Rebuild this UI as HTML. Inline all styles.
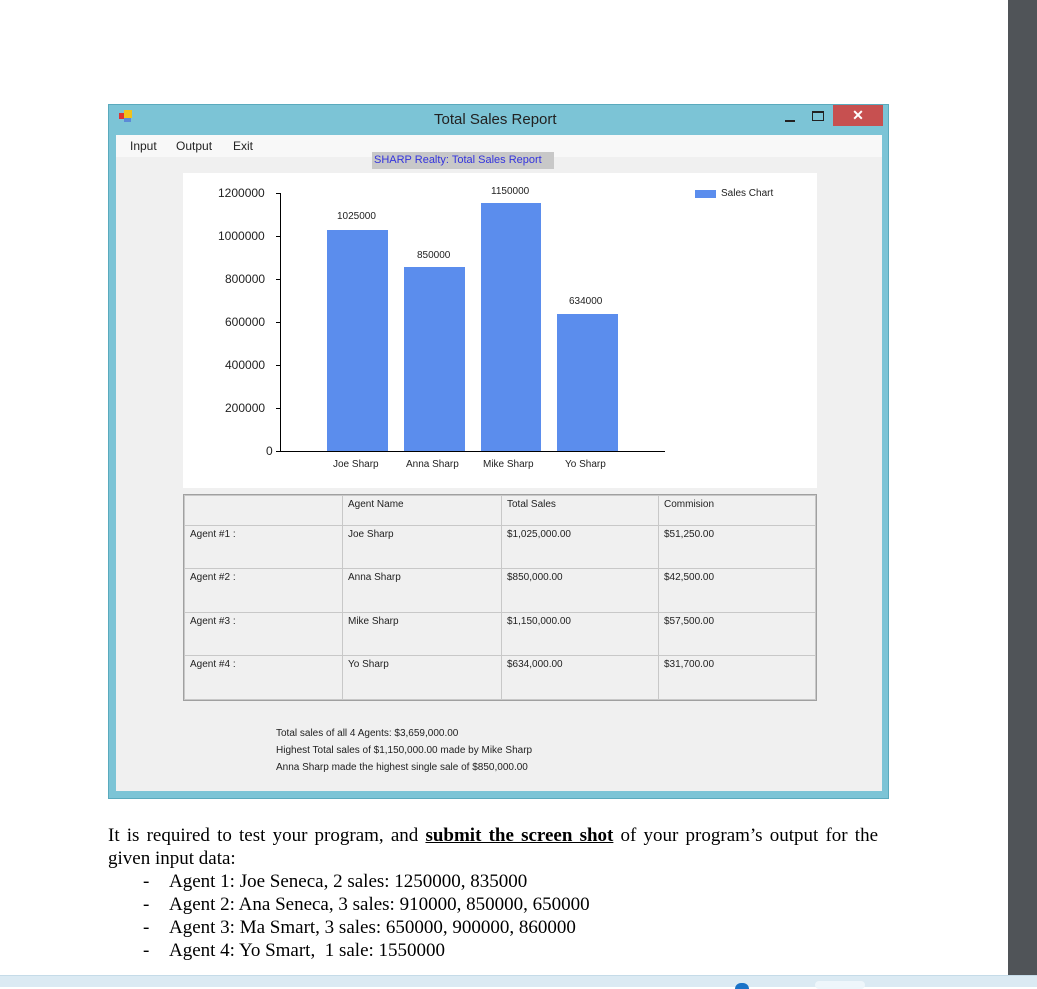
<!DOCTYPE html>
<html><head><meta charset="utf-8"><style>
*{margin:0;padding:0;box-sizing:border-box}
body{width:1037px;height:987px;background:#fff;position:relative;overflow:hidden;font-family:"Liberation Sans",sans-serif}
.a{position:absolute}
.t{font-size:11px;color:#222;position:absolute;white-space:nowrap}
.cell{position:absolute;border:1px solid #c8c8c8;background:#f0f0f0;font-size:10px;color:#222;padding:3px 5px}
.ser{font-family:"Liberation Serif",serif;font-size:19px;color:#000;position:absolute;white-space:nowrap}
</style></head><body>
<div class="a" style="left:1008px;top:0;width:29px;height:975px;background:#505458"></div>
<div class="a" style="left:0;top:975px;width:1037px;height:12px;background:#dbeaf3;border-top:1px solid #c5dbe8"></div>
<div class="a" style="left:735px;top:983px;width:14px;height:6px;background:#1a73c8;border-radius:7px 7px 0 0"></div>
<div class="a" style="left:815px;top:981px;width:50px;height:8px;background:#eef6fb;border-radius:4px"></div>

<div class="a" style="left:108px;top:104px;width:781px;height:695px;background:#7cc4d6;border:1px solid #5aaabd"></div>
<div class="a" style="left:119px;top:113px;width:6px;height:6px;background:#d33"></div>
<div class="a" style="left:124px;top:110px;width:8px;height:8px;background:#f2c21b"></div>
<div class="a" style="left:124px;top:118px;width:7px;height:4px;background:#5b8ad8"></div>
<div class="t" style="left:434px;top:111px;font-size:15px;color:#222">Total Sales Report</div>
<div class="a" style="left:785px;top:120px;width:10px;height:2px;background:#222"></div>
<div class="a" style="left:812px;top:111px;width:12px;height:10px;border:1px solid #222;border-top-width:2px"></div>
<div class="a" style="left:833px;top:105px;width:50px;height:21px;background:#c75050;color:#fff;font-size:14px;text-align:center;line-height:21px;font-weight:bold">✕</div>

<div class="a" style="left:116px;top:135px;width:766px;height:656px;background:#f0f0f0"></div>
<div class="a" style="left:116px;top:135px;width:766px;height:22px;background:#f8f8f8"></div>
<div class="t" style="left:130px;top:139px;font-size:12px">Input</div>
<div class="t" style="left:176px;top:139px;font-size:12px">Output</div>
<div class="t" style="left:233px;top:139px;font-size:12px">Exit</div>
<div class="a" style="left:372px;top:152px;width:182px;height:17px;background:#c8c8c8"></div>
<div class="t" style="left:374px;top:154px;color:#3333dd">SHARP Realty: Total Sales Report</div>

<div class="a" style="left:183px;top:173px;width:634px;height:315px;background:#fff"></div>
<svg class="a" style="left:0;top:0" width="1037" height="987">
<g stroke="#000" stroke-width="1">
<line x1="280.5" y1="193" x2="280.5" y2="451"/>
<line x1="280" y1="451.5" x2="665" y2="451.5"/>
<line x1="276" y1="193.5" x2="280" y2="193.5"/>
<line x1="276" y1="236.5" x2="280" y2="236.5"/>
<line x1="276" y1="279.5" x2="280" y2="279.5"/>
<line x1="276" y1="322.5" x2="280" y2="322.5"/>
<line x1="276" y1="365.5" x2="280" y2="365.5"/>
<line x1="276" y1="408.5" x2="280" y2="408.5"/>
<line x1="276" y1="451.5" x2="280" y2="451.5"/>
</g>
<g fill="#5b8ded">
<rect x="327" y="230" width="61" height="221"/>
<rect x="404" y="267" width="61" height="184"/>
<rect x="481" y="203" width="60" height="248"/>
<rect x="557" y="314" width="61" height="137"/>
<rect x="695" y="190" width="21" height="8"/>
</g>
</svg>
<div class="t" style="left:218px;top:186px;font-size:12px">1200000</div>
<div class="t" style="left:218px;top:229px;font-size:12px">1000000</div>
<div class="t" style="left:225px;top:272px;font-size:12px">800000</div>
<div class="t" style="left:225px;top:315px;font-size:12px">600000</div>
<div class="t" style="left:225px;top:358px;font-size:12px">400000</div>
<div class="t" style="left:225px;top:401px;font-size:12px">200000</div>
<div class="t" style="left:266px;top:444px;font-size:12px">0</div>
<div class="t" style="left:337px;top:211px;font-size:10px">1025000</div>
<div class="t" style="left:417px;top:250px;font-size:10px">850000</div>
<div class="t" style="left:491px;top:186px;font-size:10px">1150000</div>
<div class="t" style="left:569px;top:296px;font-size:10px">634000</div>
<div class="t" style="left:333px;top:459px;font-size:10px">Joe Sharp</div>
<div class="t" style="left:406px;top:459px;font-size:10px">Anna Sharp</div>
<div class="t" style="left:483px;top:459px;font-size:10px">Mike Sharp</div>
<div class="t" style="left:565px;top:459px;font-size:10px">Yo Sharp</div>
<div class="t" style="left:721px;top:188px;font-size:10px">Sales Chart</div>

<div class="a" style="left:183px;top:494px;width:634px;height:207px;border:1px solid #a0a0a0;background:#f0f0f0"></div>
<div class="cell" style="left:184px;top:495px;width:159px;height:31px"></div>
<div class="cell" style="left:342px;top:495px;width:160px;height:31px">Agent Name</div>
<div class="cell" style="left:501px;top:495px;width:158px;height:31px">Total Sales</div>
<div class="cell" style="left:658px;top:495px;width:158px;height:31px">Commision</div>

<div class="cell" style="left:184px;top:525px;width:159px;height:44px">Agent #1 :</div>
<div class="cell" style="left:342px;top:525px;width:160px;height:44px">Joe Sharp</div>
<div class="cell" style="left:501px;top:525px;width:158px;height:44px">$1,025,000.00</div>
<div class="cell" style="left:658px;top:525px;width:158px;height:44px">$51,250.00</div>

<div class="cell" style="left:184px;top:568px;width:159px;height:45px">Agent #2 :</div>
<div class="cell" style="left:342px;top:568px;width:160px;height:45px">Anna Sharp</div>
<div class="cell" style="left:501px;top:568px;width:158px;height:45px">$850,000.00</div>
<div class="cell" style="left:658px;top:568px;width:158px;height:45px">$42,500.00</div>

<div class="cell" style="left:184px;top:612px;width:159px;height:44px">Agent #3 :</div>
<div class="cell" style="left:342px;top:612px;width:160px;height:44px">Mike Sharp</div>
<div class="cell" style="left:501px;top:612px;width:158px;height:44px">$1,150,000.00</div>
<div class="cell" style="left:658px;top:612px;width:158px;height:44px">$57,500.00</div>

<div class="cell" style="left:184px;top:655px;width:159px;height:45px">Agent #4 :</div>
<div class="cell" style="left:342px;top:655px;width:160px;height:45px">Yo Sharp</div>
<div class="cell" style="left:501px;top:655px;width:158px;height:45px">$634,000.00</div>
<div class="cell" style="left:658px;top:655px;width:158px;height:45px">$31,700.00</div>

<div class="t" style="left:276px;top:728px;font-size:10px">Total sales of all 4 Agents: $3,659,000.00</div>
<div class="t" style="left:276px;top:745px;font-size:10px">Highest Total sales of $1,150,000.00 made by Mike Sharp</div>
<div class="t" style="left:276px;top:762px;font-size:10px">Anna Sharp made the highest single sale of $850,000.00</div>

<div class="ser" style="left:108px;top:825px;width:770px;text-align:justify;text-align-last:justify">It is required to test your program, and <b><u>submit the screen shot</u></b> of your program’s output for the</div>
<div class="ser" style="left:108px;top:848px">given input data:</div>
<div class="ser" style="left:143px;top:871px">-</div><div class="ser" style="left:169px;top:871px">Agent 1: Joe Seneca, 2 sales: 1250000, 835000</div>
<div class="ser" style="left:143px;top:894px">-</div><div class="ser" style="left:169px;top:894px">Agent 2: Ana Seneca, 3 sales: 910000, 850000, 650000</div>
<div class="ser" style="left:143px;top:917px">-</div><div class="ser" style="left:169px;top:917px">Agent 3: Ma Smart, 3 sales: 650000, 900000, 860000</div>
<div class="ser" style="left:143px;top:940px">-</div><div class="ser" style="left:169px;top:940px">Agent 4: Yo Smart, &nbsp;1 sale: 1550000</div>
</body></html>
